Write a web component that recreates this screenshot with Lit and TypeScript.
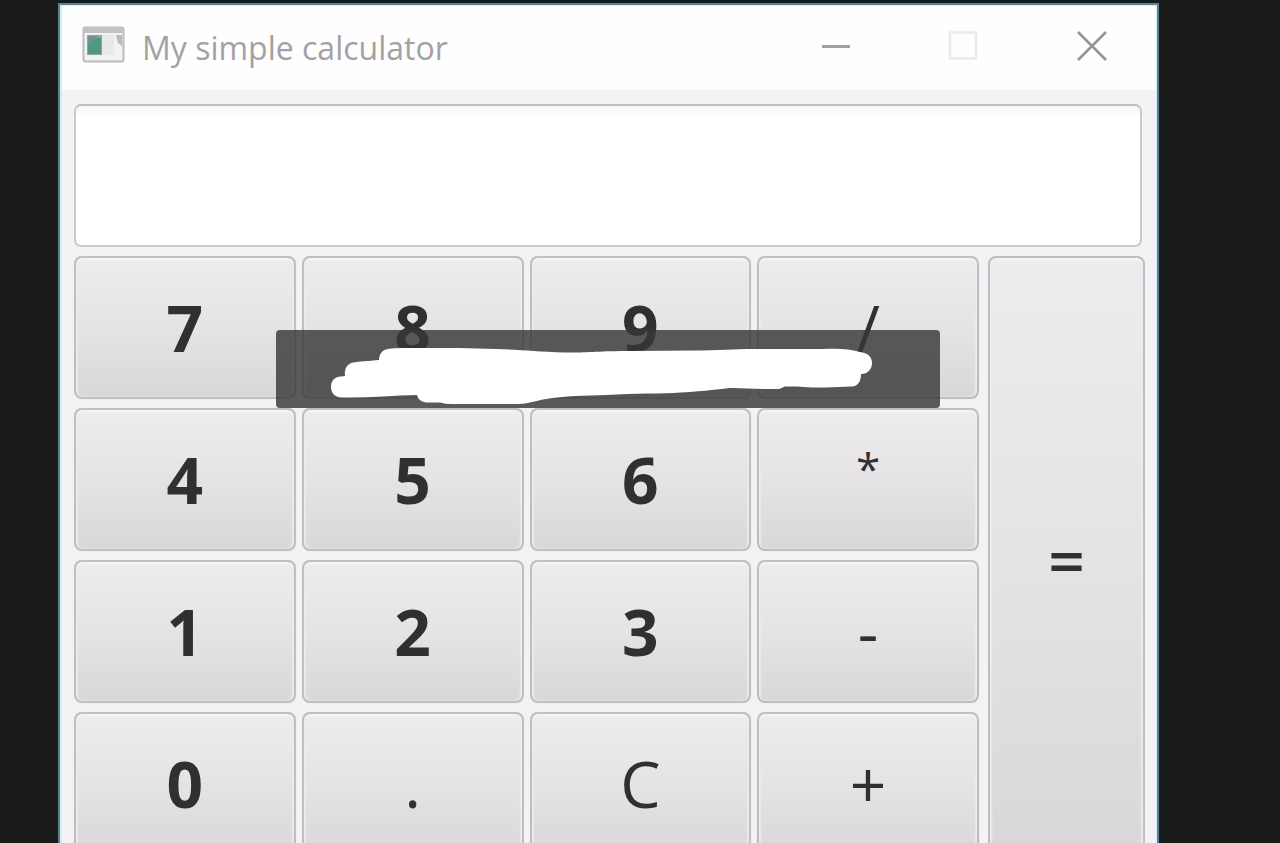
import { LitElement, html, css, svg } from "lit";
import { customElement, state } from "lit/decorators.js";

type Key = { label: string; name: string; kind: string };

const KEYS: Key[] = [
  { label: "7", name: "7", kind: "digit" },
  { label: "8", name: "8", kind: "digit" },
  { label: "9", name: "9", kind: "digit" },
  { label: "/", name: "divide", kind: "op" },
  { label: "4", name: "4", kind: "digit" },
  { label: "5", name: "5", kind: "digit" },
  { label: "6", name: "6", kind: "digit" },
  { label: "*", name: "multiply", kind: "star" },
  { label: "1", name: "1", kind: "digit" },
  { label: "2", name: "2", kind: "digit" },
  { label: "3", name: "3", kind: "digit" },
  { label: "-", name: "subtract", kind: "op" },
  { label: "0", name: "0", kind: "digit" },
  { label: ".", name: "decimal point", kind: "op" },
  { label: "C", name: "clear", kind: "op" },
  { label: "+", name: "add", kind: "op" },
];

@customElement("app-root")
export class AppRoot extends LitElement {
  @state() private entry = "";

  static styles = css`
    :host {
      display: block;
      position: relative;
      box-sizing: border-box;
      height: 100vh;
      overflow: hidden;
      padding: 3px 121px 0 58px;
      background: linear-gradient(90deg, #1c1b1c 0, #1c1b1c 58px, #101b1e 70px, #101b1e calc(100% - 130px), #1b1c1a calc(100% - 112px));
      font-family: "Open Sans", "Noto Sans", sans-serif;
    }
    .window {
      border: 2px solid #5d8193;
      border-bottom: 0;
      background: #f4f2f5;
      box-shadow: inset 2px 1px 0 #d3edf7, inset -1px 0 0 #d3edf7;
    }
    .titlebar {
      display: flex;
      align-items: center;
      height: 84px;
      margin: 1px 1px 0 2px;
      padding-left: 20px;
      background: #fefefe;
    }
    .app-icon {
      display: block;
      flex: none;
      width: 44px;
      height: 38px;
      margin-bottom: 6px;
    }
    .title {
      flex: 1;
      margin: 0 0 0 16px;
      font-size: 32px;
      line-height: 44px;
      font-weight: 400;
      color: #a3a1a4;
      white-space: nowrap;
    }
    .control {
      width: 128px;
      height: 80px;
      margin-bottom: 4px;
      padding: 0;
      border: 0;
      background: none;
      display: flex;
      align-items: center;
      justify-content: center;
    }
    .control svg {
      display: block;
      width: 32px;
      height: 32px;
      fill: none;
    }
    .body {
      padding: 14px 12px 12px 14px;
      display: grid;
      gap: 9px;
    }
    .display {
      display: block;
      box-sizing: border-box;
      width: calc(100% - 3px);
      height: 143px;
      padding: 0 24px;
      border: 2px solid #cbc9cc;
      border-top-color: #bfbdc0;
      border-radius: 7px;
      outline: none;
      background: linear-gradient(#f6f5f7, #ffffff 12px);
      font: 400 64px/80px "Open Sans", "Noto Sans", sans-serif;
      color: #2e2e31;
      text-align: right;
    }
    .keypad {
      display: grid;
      grid-template-columns: minmax(0, 905fr) minmax(0, 157fr);
      gap: 9px;
    }
    .keys {
      display: grid;
      grid-template-columns: repeat(4, minmax(0, 1fr));
      grid-auto-rows: 143px;
      gap: 9px 6px;
    }
    .key {
      box-sizing: border-box;
      padding: 0;
      border: 2px solid #c0bec1;
      border-radius: 8px;
      background: linear-gradient(#eeecef, #e5e3e6 50%, #d9d7da);
      box-shadow: 0 0 1px #c9c7ca, inset 0 2px 2px #f6f4f7, inset 2px 0 2px #eae8eb, inset -2px 0 2px #eae8eb;
      font: 400 64px/80px "Open Sans", "Noto Sans", sans-serif;
      color: #303033;
      text-align: center;
    }
    .digit {
      font-weight: 700;
    }
    .equals {
      padding-top: 8px;
      font-weight: 600;
    }
    .star {
      padding-bottom: 24px;
      font-size: 44px;
    }
    .caption {
      position: absolute;
      top: 330px;
      left: 276px;
      width: 664px;
      height: 78px;
      border-radius: 4px;
      background: rgba(54, 54, 57, 0.81);
    }
    .caption svg {
      display: block;
      width: 100%;
      height: 100%;
    }
  `;

  private press(label: string) {
    this.entry = label === "C" ? "" : this.entry + label;
  }

  private icon(kind: string) {
    if (kind === "Minimize") return svg`<path d="M2 16.500h28" stroke="#a3a1a3" stroke-width="3"/>`;
    if (kind === "Maximize") return svg`<rect x="2" y="2.500" width="26" height="26" stroke="#ebe9eb" stroke-width="2.500"/>`;
    return svg`<path d="M2 2l28 28M30 2L2 30" stroke="#969496" stroke-width="2.500"/>`;
  }

  render() {
    return html`
      <main class="window">
        <header class="titlebar">
          <svg class="app-icon" viewBox="0 0 44 38" aria-hidden="true">
            <rect x="1.500" y="1.500" width="40" height="34" rx="2" fill="#f2f1f3" stroke="#bcb9be" stroke-width="2"/>
            <path d="M1 1h37l4 4v2H1z" fill="#c4c1c6"/>
            <path d="M5 9h15v20H5z" fill="#91a3a5"/>
            <path d="M6 12h13v16H6z" fill="#529880"/>
            <path d="M6 10h10l-10 8z" fill="#71918f"/>
            <path d="M20 9h12v20H20z" fill="#e7e9eb"/>
            <path d="M34 9h6v11l-4-3z" fill="#bab9bd"/>
          </svg>
          <h1 class="title">My simple calculator</h1>
          ${["Minimize", "Maximize", "Close"].map(
            (kind) => html`<button class="control" type="button" aria-label=${kind}>
              <svg viewBox="0 0 32 32" aria-hidden="true">${this.icon(kind)}</svg>
            </button>`
          )}
        </header>
        <section class="body">
          <input class="display" type="text" aria-label="Display" readonly .value=${this.entry} />
          <div class="keypad">
            <div class="keys">
              ${KEYS.map(
                (k) => html`<button class="key ${k.kind}" type="button" aria-label=${k.name} @click=${() => this.press(k.label)}>${k.label}</button>`
              )}
            </div>
            <button class="key equals" type="button" aria-label="equals">=</button>
          </div>
        </section>
      </main>
      <div class="caption">
        <svg viewBox="0 0 664 78" preserveAspectRatio="none" aria-hidden="true">
          <path fill="#fff" d="M65 46.500C58 47 55 51 55 57S59 67.500 66 67.500C92 68 116 65.500 141 65C142 70 147 73 154 72.500L164 72.500Q169 74 176 74L243 74C251 74 258 71 270 69C288 66 309 65.500 330 65C360 63 385 64 405 62.500C430 61 445 59 453 58C465 57.500 480 59.500 500 59C506 59 507 57 509 56.500C524 56 532 58 550 57.500L575 56.500C582 57 585 51 585 44C592 44 596 39 596 33C596 26 591 23 584 22C573 18.500 562 18.500 547 19L490 19C463 18.500 445 20 420 20.500L355 21C320 21 310 23 288 22.500C260 21.500 242 19.500 220 19L182 18C142 18 118 17.500 112 19C106 20 103 24 103 30C93 31 83 31.500 77 32.500C71 34 68 39 69 46Z"/>
        </svg>
      </div>
    `;
  }
}
